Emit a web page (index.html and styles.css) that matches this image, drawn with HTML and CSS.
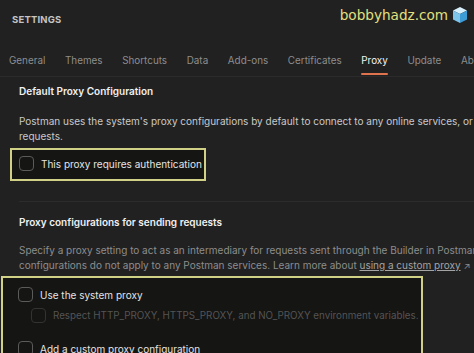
FILE: index.html
```html
<!DOCTYPE html>
<html lang="en">

<head>
    <meta charset="UTF-8">
    <meta name="viewport" content="width=device-width, initial-scale=1.0">
    <title>settings</title>
    <link rel="stylesheet" href="styles.css">
</head>

<body>
    <div class="header">
        <div class="title">SETTINGS</div>
        <div class="brand">
            <span>bobbyhadz.com</span>
            <svg class="cube" width="16" height="18" viewBox="0 0 16 18">
                <polygon points="8,1 15,4.5 8,8 1,4.5" fill="#d8f0fb" />
                <polygon points="1,4.5 8,8 8,17 1,13.5" fill="#7cc4ea" />
                <polygon points="15,4.5 8,8 8,17 15,13.5" fill="#3d9bd6" />
            </svg>
        </div>
    </div>

    <div class="tabs">
        <div class="tab">General</div>
        <div class="tab">Themes</div>
        <div class="tab">Shortcuts</div>
        <div class="tab">Data</div>
        <div class="tab">Add-ons</div>
        <div class="tab">Certificates</div>
        <div class="tab active">Proxy</div>
        <div class="tab">Update</div>
        <div class="tab">About</div>
    </div>

    <div class="content">
        <div class="section">
            <h3>Default Proxy Configuration</h3>
            <p class="desc light">Postman uses the system's proxy configurations by default to connect to any online services, or to send API<br>requests.</p>
            <div class="mark mark-one">
                <label class="check"><span class="box"></span>This proxy requires authentication</label>
            </div>
        </div>

        <div class="line"></div>

        <div class="section">
            <h3>Proxy configurations for sending requests</h3>
            <p class="desc second">Specify a proxy setting to act as an intermediary for requests sent through the Builder in Postman. These<br>configurations do not apply to any Postman services. Learn more about <a href="#">using a custom proxy</a> <span class="arrow">&#8599;</span></p>
        </div>
        <div class="mark mark-two">
            <label class="check"><span class="box"></span>Use the system proxy</label>
            <label class="check sub"><span class="box"></span>Respect HTTP_PROXY, HTTPS_PROXY, and NO_PROXY environment variables.</label>
            <label class="check"><span class="box"></span>Add a custom proxy configuration</label>
        </div>
    </div>
</body>

</html>
```

FILE: styles.css
```css
* {
    margin: 0px;
    padding: 0px;
    box-sizing: border-box;
}

body {
    width: 474px;
    height: 353px;
    overflow: hidden;
    background: #212121;
    font-family: Inter, "Noto Sans", sans-serif;
    color: #e6e6e6;
}

.header {
    height: 40px;
    display: flex;
    align-items: center;
    justify-content: space-between;
    padding: 0 6px 0 12px;
}

.title {
    font-size: 9.5px;
    font-weight: 700;
    color: #c4c4c4;
    letter-spacing: 0.2px;
    margin-top: -1px;
}

.brand {
    display: flex;
    align-items: center;
    gap: 4px;
    margin-top: -10px;
}

.brand span {
    font-family: "DejaVu Sans", sans-serif;
    font-size: 13.6px;
    color: #e3e07f;
}

.tabs {
    width: 600px;
    height: 37px;
    display: flex;
    gap: 19.6px;
    padding: 0 0 0 9px;
    border-bottom: 1px solid #2b2b2b;
    white-space: nowrap;
}

.tab {
    font-size: 9.9px;
    color: #8e8e8e;
    padding-top: 14px;
    height: 100%;
    position: relative;
}

.tab.active {
    color: #f2f2f2;
}

.tab.active::after {
    content: "";
    position: absolute;
    left: 0;
    right: 0;
    bottom: 1px;
    height: 2px;
    border-radius: 1px;
    background: #e0734f;
}

.content {
    width: 600px;
    padding-top: 7px;
}

.section {
    padding: 0 0 0 19px;
}

h3 {
    font-size: 10px;
    font-weight: 600;
    color: #f0f0f0;
    line-height: 14px;
    white-space: nowrap;
}

.desc {
    margin-top: 16px;
    font-size: 10px;
    line-height: 15px;
    color: #8d8d8d;
    white-space: nowrap;
}

.desc.second {
    margin-top: 14px;
}

.desc.light {
    color: #c9c9c9;
}

.desc a {
    color: #a4a4a4;
    text-decoration: underline;
}

.arrow {
    font-size: 9px;
}

.mark {
    border: 2px solid #d0d086;
    background: #151513;
}

.mark-one {
    margin: 4px 0 0 -9px;
    width: 196px;
    padding: 6px 0 8px 7px;
}

.mark-two {
    margin: 3px 0 0 1px;
    width: 422px;
    height: 90px;
    padding: 9px 0 0 15px;
    display: flex;
    flex-direction: column;
    gap: 6px;
}

.line {
    margin: 20px 0 13px 19px;
    height: 1px;
    background: #2c2c2c;
}

.check {
    display: flex;
    align-items: center;
    gap: 7px;
    font-size: 10px;
    color: #e4e4e4;
    white-space: nowrap;
}

.box {
    flex: none;
    width: 15px;
    height: 15px;
    border: 1.5px solid #5b5b5b;
    border-radius: 4px;
}

.check.sub {
    padding-left: 13px;
    margin-bottom: 12px;
    font-size: 9.8px;
    color: #545454;
}

.check.sub .box {
    border-color: #333;
}
```
